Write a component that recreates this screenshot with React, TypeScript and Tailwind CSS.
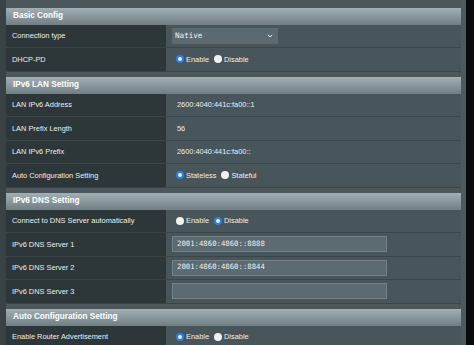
import React from 'react'

const sans = { fontFamily: '"Liberation Sans", Arial, sans-serif' }

function Header({ title }: { title: string }) {
  return (
    <div className="flex h-[16.5px] items-center bg-gradient-to-b from-[#a2b0b5] to-[#717f84] pl-[7px] text-[8.2px] font-bold text-white">
      {title}
    </div>
  )
}

function Row({ label, children }: { label: string; children?: React.ReactNode }) {
  return (
    <div className="flex h-[23.5px] border-b border-[#3a4549]">
      <div className="flex w-[160px] items-center bg-[#2d373a] pl-[6px] text-[7.4px] text-[#eceff0]">
        {label}
      </div>
      <div className="flex flex-1 items-center bg-[#48565b] pl-[6px] text-[7.4px] text-[#eceff0]">
        {children}
      </div>
    </div>
  )
}

function Radio({ checked, label }: { checked?: boolean; label: string }) {
  return (
    <span className="mr-[5px] flex items-center">
      {checked ? (
        <span className="h-[8px] w-[8px] rounded-full border-[2px] border-[#2c7ee8] bg-[#e6eef8]" />
      ) : (
        <span className="h-[8px] w-[8px] rounded-full bg-[#f2f2f2]" />
      )}
      <span className="ml-[2px]">{label}</span>
    </span>
  )
}

function Radios({ items }: { items: { label: string; checked?: boolean }[] }) {
  return (
    <div className="ml-[4px] flex items-center">
      {items.map((it) => (
        <Radio key={it.label} label={it.label} checked={it.checked} />
      ))}
    </div>
  )
}

function TextBox({ value }: { value: string }) {
  return (
    <div
      className="flex h-[16px] w-[215px] items-center border border-[#718187] bg-[#5b6b71] pl-[4px] text-[7.3px] text-[#eef1f2]"
      style={{ fontFamily: '"DejaVu Sans Mono", "Liberation Mono", monospace' }}
    >
      {value}
    </div>
  )
}

export default function App() {
  return (
    <div className="flex h-[345px] w-[474px] overflow-hidden bg-[#4b575b]" style={sans}>
      <div className="w-[6px] bg-[#394346]" />
      <div className="flex w-[455px] flex-col gap-[5.5px] pt-[8px]">
        <div>
          <Header title="Basic Config" />
          <Row label="Connection type">
            <div className="flex h-[16px] w-[106px] items-center justify-between bg-[#5a6a70] pl-[3px] pr-[5px] text-[7.6px] text-[#eef1f2]"
              style={{ fontFamily: '"DejaVu Sans Mono", "Liberation Mono", monospace' }}>
              <span>Native</span>
              <svg width="6" height="4" viewBox="0 0 6 4">
                <path d="M0.8 0.8 L3 3 L5.2 0.8" stroke="#e8ecee" strokeWidth="1" fill="none" />
              </svg>
            </div>
          </Row>
          <Row label="DHCP-PD">
            <Radios items={[{ label: 'Enable', checked: true }, { label: 'Disable' }]} />
          </Row>
        </div>

        <div>
          <Header title="IPv6 LAN Setting" />
          <Row label="LAN IPv6 Address">
            <span className="ml-[5px]">2600:4040:441c:fa00::1</span>
          </Row>
          <Row label="LAN Prefix Length">
            <span className="ml-[5px]">56</span>
          </Row>
          <Row label="LAN IPv6 Prefix">
            <span className="ml-[5px]">2600:4040:441c:fa00::</span>
          </Row>
          <Row label="Auto Configuration Setting">
            <Radios items={[{ label: 'Stateless', checked: true }, { label: 'Stateful' }]} />
          </Row>
        </div>

        <div>
          <Header title="IPv6 DNS Setting" />
          <Row label="Connect to DNS Server automatically">
            <Radios items={[{ label: 'Enable' }, { label: 'Disable', checked: true }]} />
          </Row>
          <Row label="IPv6 DNS Server 1">
            <TextBox value="2001:4860:4860::8888" />
          </Row>
          <Row label="IPv6 DNS Server 2">
            <TextBox value="2001:4860:4860::8844" />
          </Row>
          <Row label="IPv6 DNS Server 3">
            <TextBox value="" />
          </Row>
        </div>

        <div>
          <Header title="Auto Configuration Setting" />
          <Row label="Enable Router Advertisement">
            <Radios items={[{ label: 'Enable', checked: true }, { label: 'Disable' }]} />
          </Row>
        </div>
      </div>
      <div className="w-[5px] bg-[#4e5a5e]" />
      <div className="flex-1 bg-[#0b0b0b]" />
    </div>
  )
}
